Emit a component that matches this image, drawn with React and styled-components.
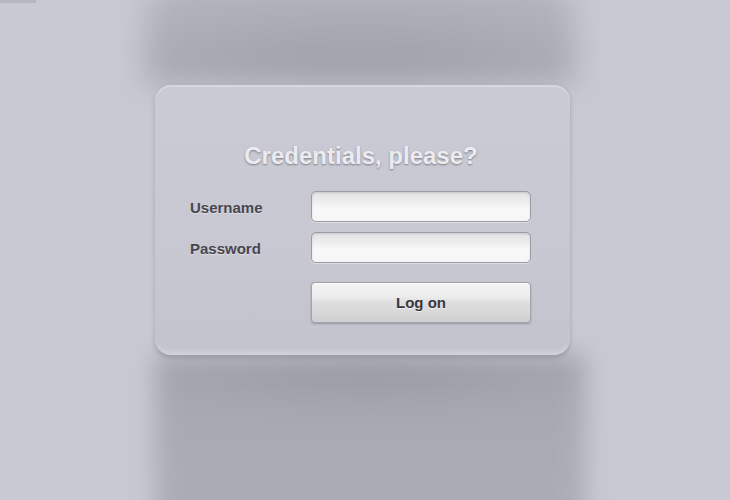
import React from "react";
import styled, { createGlobalStyle } from "styled-components";

const GlobalStyle = createGlobalStyle`
  html, body {
    margin: 0;
    padding: 0;
    background: #c9c9d3;
  }
  body {
    font-family: "Liberation Sans", Arial, sans-serif;
    overflow: hidden;
  }
`;

const Page = styled.div`
  position: relative;
  height: 500px;
  overflow: hidden;
  background: #c9c9d3;
  display: flex;
  flex-direction: column;
  align-items: center;
`;

const Corner = styled.div`
  position: absolute;
  top: 0;
  left: 0;
  width: 36px;
  height: 3px;
  background: #b6b6c0;
`;

const TopShade = styled.div`
  flex: none;
  width: 430px;
  height: 105px;
  margin: -20px 0 0 -10px;
  background: radial-gradient(
    ellipse 75% 85% at 50% 100%,
    #9c9ca6 0%,
    #a6a6b0 50%,
    #b2b2bc 100%
  );
  border-radius: 40px 40px 0 0;
  filter: blur(15px);
`;

const BottomShade = styled.div`
  flex: 1;
  width: 430px;
  margin: 0 0 -60px 10px;
  background: radial-gradient(
      ellipse 55% 30% at 50% 0%,
      #98989f 0%,
      rgba(160, 160, 170, 0) 100%
    ),
    linear-gradient(#a4a4ae, #aaaab4 40%, #adadb7);
  filter: blur(12px);
`;

const Panel = styled.div`
  position: relative;
  z-index: 1;
  width: 415px;
  height: 270px;
  margin-left: -5px;
  box-sizing: border-box;
  border-radius: 16px;
  padding: 57px 0 0 35px;
  background: linear-gradient(#cacad4 0%, #c8c8d2 60%, #c3c3cd 100%);
  box-shadow: inset 0 2px 1px rgba(255, 255, 255, 0.25),
    inset 0 -7px 5px -4px rgba(255, 255, 255, 0.3),
    0 0 4px rgba(160, 160, 170, 0.2), 0 3px 4px rgba(110, 110, 120, 0.35);
`;

const Title = styled.h1`
  margin: 0 0 21px;
  padding-right: 38px;
  text-align: center;
  font-size: 24px;
  font-weight: bold;
  color: #ececf0;
  text-shadow: 0 1px 2px rgba(60, 60, 70, 0.55);
`;

const Form = styled.form`
  display: grid;
  grid-template-columns: 121px 220px;
  row-gap: 10px;
  align-items: center;
`;

const Label = styled.label`
  font-size: 15px;
  font-weight: bold;
  color: #46464e;
  text-shadow: 0 1px 0 rgba(255, 255, 255, 0.45);
  margin-top: 2px;
`;

const Input = styled.input`
  box-sizing: border-box;
  width: 220px;
  height: 31px;
  margin: 0;
  border: 1px solid #9c9ca6;
  border-radius: 5px;
  background: linear-gradient(#e2e2e4 0%, #eeeeef 35%, #f8f8f8 55%, #f6f6f6 100%);
  box-shadow: inset 0 1px 2px rgba(0, 0, 0, 0.12), 0 1px 0 rgba(255, 255, 255, 0.4);
  font-family: inherit;
  font-size: 14px;
  outline: none;
`;

const Button = styled.button`
  grid-column: 2;
  margin-top: 9px;
  box-sizing: border-box;
  width: 220px;
  height: 41px;
  border: 1px solid #a2a2aa;
  border-radius: 4px;
  background: linear-gradient(#f4f4f4 0%, #ececec 35%, #dedede 50%, #d8d8d9 75%, #cfcfd2 100%);
  box-shadow: 0 1px 2px rgba(60, 60, 70, 0.35), inset 0 1px 0 rgba(255, 255, 255, 0.7);
  font-family: inherit;
  font-size: 15px;
  font-weight: bold;
  color: #38383e;
  text-shadow: 0 1px 0 rgba(255, 255, 255, 0.6);
  cursor: pointer;
`;

export default function App() {
  return (
    <>
      <GlobalStyle />
      <Page>
        <Corner />
        <TopShade />
        <Panel>
          <Title>Credentials, please?</Title>
          <Form onSubmit={(e) => e.preventDefault()}>
            <Label htmlFor="username">Username</Label>
            <Input id="username" type="text" />
            <Label htmlFor="password">Password</Label>
            <Input id="password" type="password" />
            <Button type="submit">Log on</Button>
          </Form>
        </Panel>
        <BottomShade />
      </Page>
    </>
  );
}
